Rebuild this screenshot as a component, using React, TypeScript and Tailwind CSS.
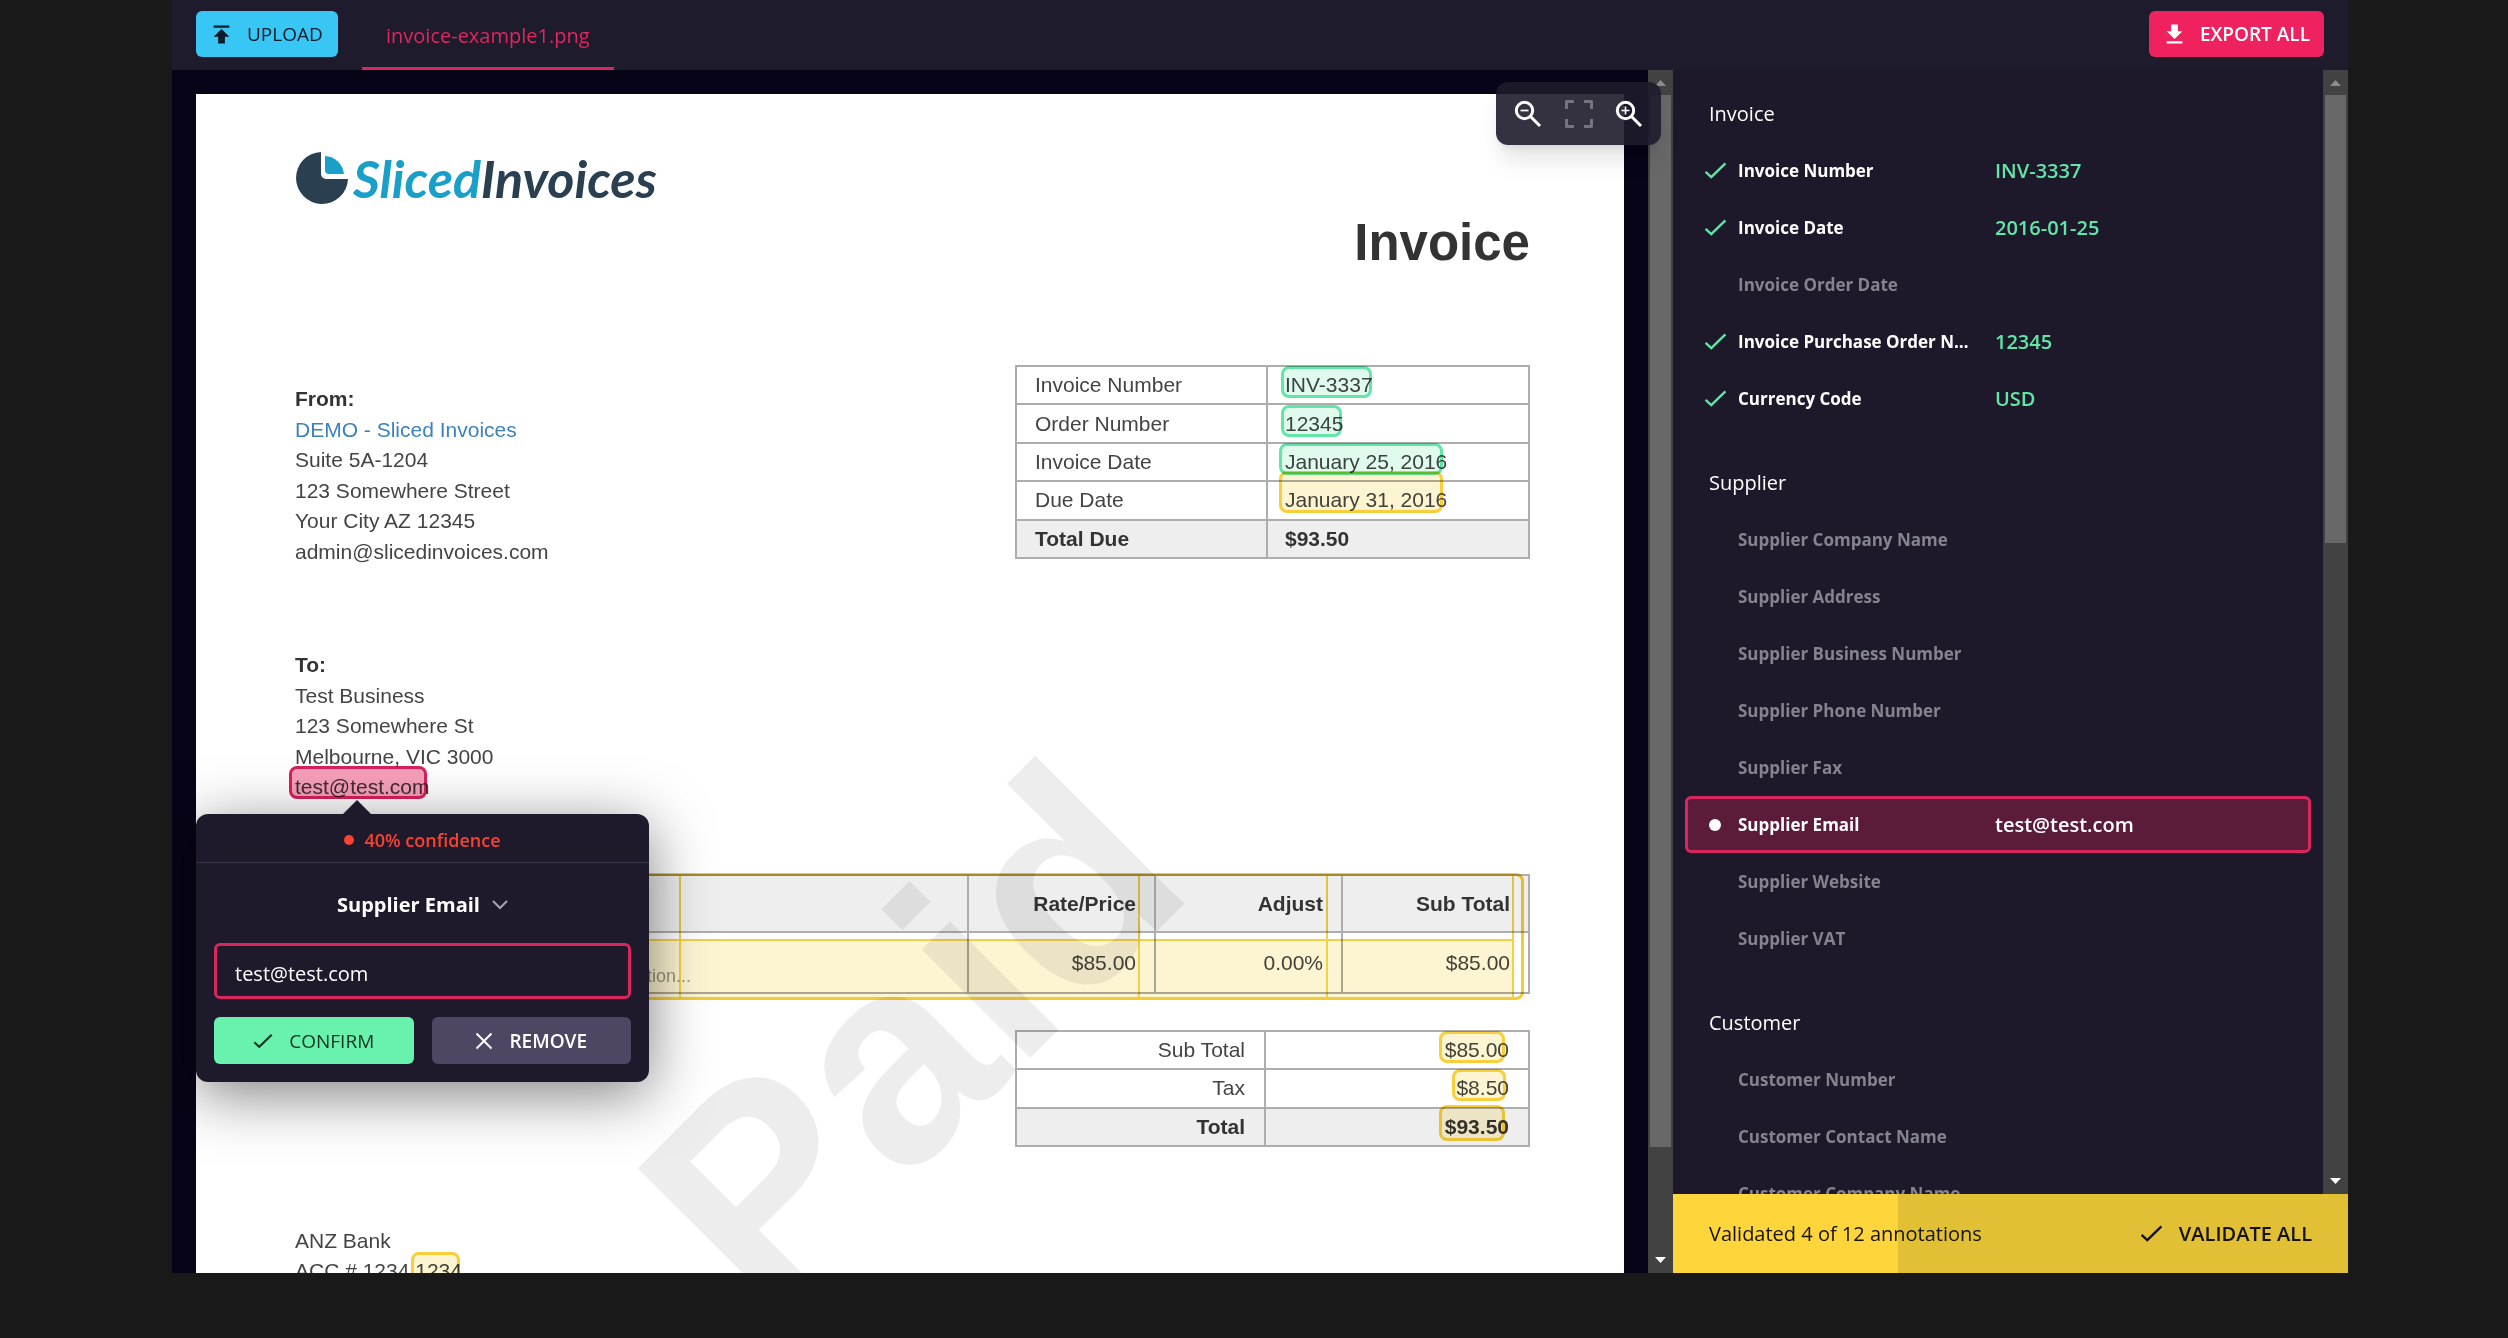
import React from "react";
import { MdPublish, MdFileDownload } from "react-icons/md";

type Tone = "green" | "yellow" | "pink";

const tones: Record<Tone, string> = {
  green: "border-[#62e6a8] bg-[#62e6a8]/20",
  yellow: "border-[#f8cf3a] bg-[#f8d84a]/25",
  pink: "border-[#d9205c] bg-[#ee2a66]/45",
};

function Mark({ tone, box, children }: { tone: Tone; box: string; children: React.ReactNode }) {
  return (
    <span className="relative inline-block">
      {children}
      <span className={`absolute rounded-lg border-3 mix-blend-multiply ${tones[tone]} ${box}`} />
    </span>
  );
}

function CheckIcon({ className }: { className: string }) {
  return (
    <svg viewBox="0 0 24 18" fill="none" stroke="currentColor" strokeWidth="2.5" className={className} aria-hidden="true">
      <path d="M1.5 10.5 7.5 16 22.5 1.5" />
    </svg>
  );
}

function Scrollbar({ thumb }: { thumb: string }) {
  return (
    <div className="flex w-[25px] shrink-0 flex-col items-center bg-[#424242]" aria-hidden="true">
      <svg viewBox="0 0 25 25" className="h-[25px] w-[25px] shrink-0"><path d="M7 16h11l-5.500-6z" fill="#8c8c8c" /></svg>
      <div className="min-h-0 w-full flex-1 px-[2px]">
        <div className={`bg-[#686868] ${thumb}`} />
      </div>
      <svg viewBox="0 0 25 25" className="h-[25px] w-[25px] shrink-0"><path d="M7 9h11l-5.500 6z" fill="#fff" /></svg>
    </div>
  );
}

type Field = { label: string; value?: string; active?: boolean };

const groups: { title: string; fields: Field[] }[] = [
  {
    title: "Invoice",
    fields: [
      { label: "Invoice Number", value: "INV-3337" },
      { label: "Invoice Date", value: "2016-01-25" },
      { label: "Invoice Order Date" },
      { label: "Invoice Purchase Order Number", value: "12345" },
      { label: "Currency Code", value: "USD" },
    ],
  },
  {
    title: "Supplier",
    fields: [
      { label: "Supplier Company Name" },
      { label: "Supplier Address" },
      { label: "Supplier Business Number" },
      { label: "Supplier Phone Number" },
      { label: "Supplier Fax" },
      { label: "Supplier Email", value: "test@test.com", active: true },
      { label: "Supplier Website" },
      { label: "Supplier VAT" },
    ],
  },
  {
    title: "Customer",
    fields: [
      { label: "Customer Number" },
      { label: "Customer Contact Name" },
      { label: "Customer Company Name" },
    ],
  },
];

function FieldRow({ label, value, active }: Field) {
  const frame = active ? "border-[#d9265f] bg-[#5b1c3a] text-white" : "border-transparent";
  const tone = value ? "text-white" : "text-[#85838d]";
  return (
    <li className={`flex h-[57px] items-center rounded-md border-3 ${frame}`}>
      <span className="flex w-[50px] shrink-0 justify-center pl-1">
        {active && <span className="size-3 rounded-full bg-white" />}
        {value && !active && <CheckIcon className="h-[17px] w-[23px] text-[#62e6a8]" />}
      </span>
      <span className={`w-[232px] shrink-0 truncate text-[17px] font-bold ${tone}`}>{label}</span>
      <span className={`ml-[25px] text-[20px] font-semibold ${active ? "text-white" : "text-[#62e6a8]"}`}>{value}</span>
    </li>
  );
}

function Header() {
  return (
    <header className="flex h-[70px] shrink-0 items-stretch bg-[#1e1b2c] px-6">
      <button className="mt-[11px] flex h-[46px] w-[142px] items-center gap-3 rounded-md bg-[#38c6f4] pl-3 text-[19px] font-medium text-[#0d1b2a]">
        <MdPublish className="size-[27px]" />
        UPLOAD
      </button>
      <nav className="ml-6 flex">
        <a href="#invoice" className="flex items-center border-b-3 border-[#d9265f] px-6 pt-1 text-[20px] text-[#e0265f]">
          invoice-example1.png
        </a>
      </nav>
      <button className="mt-[11px] ml-auto flex h-[46px] items-center gap-3 rounded-md bg-[#ef225f] pr-3.5 pl-3 text-[19px] font-semibold text-white">
        <MdFileDownload className="size-[27px]" />
        EXPORT ALL
      </button>
    </header>
  );
}

function ZoomBar() {
  return (
    <div className="absolute top-3 right-3 flex h-[63px] w-[165px] items-center justify-between rounded-xl bg-[#1e1b2c]/90 px-[18px] text-white shadow-xl">
      <button aria-label="Zoom out">
        <svg viewBox="0 0 28 28" className="size-7" fill="none" stroke="currentColor" strokeWidth="3">
          <circle cx="10.500" cy="10.500" r="8.200" />
          <path d="M16.500 16.500 26 26" />
          <path d="M6.500 10.500h8" strokeWidth="1.700" />
        </svg>
      </button>
      <button aria-label="Fit to screen" className="text-[#76737f]">
        <svg viewBox="0 0 28 28" className="size-7" fill="none" stroke="currentColor" strokeWidth="3" strokeLinejoin="round">
          <path d="M1.500 9V1.500H9M19 1.500h7.500V9M26.500 19v7.500H19M9 26.500H1.500V19" />
        </svg>
      </button>
      <button aria-label="Zoom in">
        <svg viewBox="0 0 28 28" className="size-7" fill="none" stroke="currentColor" strokeWidth="3">
          <circle cx="10.500" cy="10.500" r="8.200" />
          <path d="M16.500 16.500 26 26" />
          <path d="M6.500 10.500h8M10.500 6.500v8" strokeWidth="1.700" />
        </svg>
      </button>
    </div>
  );
}

function Popup() {
  return (
    <form className="absolute top-[720px] left-0 w-[453px] rounded-xl bg-[#1e1a2c] font-['Open_Sans','Noto_Sans',sans-serif] text-white shadow-[0_12px_60px_rgba(0,0,0,0.5)]">
      <svg viewBox="0 0 28 14" className="absolute -top-[14px] left-[147px] h-[14px] w-7" aria-hidden="true">
        <path d="M0 14 14 0l14 14z" fill="#1e1a2c" />
      </svg>
      <p className="flex h-[49px] items-center justify-center gap-2.5 border-b border-[#38354a] pt-1 text-[18px] font-semibold text-[#fb4130]">
        <span className="size-[10px] rounded-full bg-[#fb4130]" />
        40% confidence
      </p>
      <div className="flex flex-col px-[18px] pb-[18px]">
        <button type="button" className="mt-6 flex h-9 items-center justify-center gap-3 text-[20px] font-bold">
          Supplier Email
          <svg viewBox="0 0 16 10" className="h-[10px] w-4" fill="none" stroke="#a6a4b0" strokeWidth="2" aria-hidden="true">
            <path d="m1 1 7 7 7-7" />
          </svg>
        </button>
        <input
          aria-label="Supplier Email"
          defaultValue="test@test.com"
          className="mt-5 h-14 w-full rounded-md border-3 border-[#d9265f] bg-transparent px-[18px] pt-1 text-[20px] outline-none"
        />
        <div className="mt-[18px] grid grid-cols-2 gap-[18px] text-[19px]">
          <button type="button" className="flex h-[47px] items-center justify-center gap-4 rounded-md bg-[#69f2ae] font-medium text-[#0f3420]">
            <CheckIcon className="h-4 w-5" />
            CONFIRM
          </button>
          <button type="button" className="flex h-[47px] items-center justify-center gap-4 rounded-md bg-[#4d4763] font-semibold">
            <svg viewBox="0 0 18 18" className="size-[18px]" fill="none" stroke="currentColor" strokeWidth="2" aria-hidden="true">
              <path d="m1.500 1.500 15 15m0-15-15 15" />
            </svg>
            REMOVE
          </button>
        </div>
      </div>
    </form>
  );
}

const cell = "border-2 border-[#adadad]";

function InvoicePage() {
  return (
    <article className="relative h-full bg-white pt-14 pr-[94px] pl-[99px] font-['Liberation_Sans',sans-serif] text-[21px] leading-[30px] text-[#444]">
      <div className="flex h-14 items-center text-[52px]">
        <svg viewBox="0 0 54 54" className="size-[54px]" aria-hidden="true">
          <path d="M26 1A26 26 0 1 0 53 28H31a5 5 0 0 1-5-5z" fill="#2a3f50" />
          <path d="M30 5v14a4 4 0 0 0 4 4h15A20 20 0 0 0 30 5z" fill="#1a9fc9" />
        </svg>
        <span className="ml-1 font-['Lato',sans-serif] font-bold text-[#1a9fc9] italic">
          Sliced<span className="text-[#2a3f50]">Invoices</span>
        </span>
      </div>
      <h1 className="mt-[9px] text-right text-[51px] leading-[56px] font-bold text-[#333]">Invoice</h1>

      <div className="mt-[94px] flex h-[285px] items-start justify-between">
        <address className="mt-[19px] flex h-[183px] flex-col justify-between not-italic">
          <p className="font-bold text-[#333]">From:</p>
          <p><a href="#supplier" className="text-[#3c82bd]">DEMO - Sliced Invoices</a></p>
          <p>Suite 5A-1204</p>
          <p>123 Somewhere Street</p>
          <p>Your City AZ 12345</p>
          <p>admin@slicedinvoices.com</p>
        </address>
        <table className="h-[194px] w-[515px] table-fixed border-collapse">
          <tbody>
            <tr><td className={`${cell} w-[251px] pl-[18px]`}>Invoice Number</td><td className={`${cell} pl-[17px]`}><Mark tone="green" box="-top-1 -left-1 right-px h-8">INV-3337</Mark></td></tr>
            <tr><td className={`${cell} pl-[18px]`}>Order Number</td><td className={`${cell} pl-[17px]`}><Mark tone="green" box="-top-1 -left-1 right-px h-8">12345</Mark></td></tr>
            <tr><td className={`${cell} pl-[18px]`}>Invoice Date</td><td className={`${cell} pl-[17px]`}><Mark tone="green" box="-top-1 -left-1.5 right-1 h-8">January 25, 2016</Mark></td></tr>
            <tr><td className={`${cell} pl-[18px]`}>Due Date</td><td className={`${cell} pl-[17px]`}><Mark tone="yellow" box="-top-3.5 -left-1.5 right-1 h-[42px]">January 31, 2016</Mark></td></tr>
            <tr className="bg-[#eee] font-bold text-[#333]"><td className={`${cell} pl-[18px]`}>Total Due</td><td className={`${cell} pl-[17px]`}>$93.50</td></tr>
          </tbody>
        </table>
      </div>

      <address className="flex h-[152px] flex-col justify-between not-italic">
        <p className="font-bold text-[#333]">To:</p>
        <p>Test Business</p>
        <p>123 Somewhere St</p>
        <p>Melbourne, VIC 3000</p>
        <p><Mark tone="pink" box="-top-1.5 -left-1.5 right-[3px] h-[33px]">test@test.com</Mark></p>
      </address>

      <div className="relative mt-[72px]">
        <table className="h-[120px] w-full table-fixed border-collapse">
          <thead>
            <tr className="h-[57px] bg-[#eee] text-[#333]">
              <th className={`${cell} w-[115px]`} /><th className={cell} />
              <th className={`${cell} w-[187px] pr-[18px] text-right`}>Rate/Price</th>
              <th className={`${cell} w-[187px] pr-[18px] text-right`}>Adjust</th>
              <th className={`${cell} w-[187px] pr-[18px] text-right`}>Sub Total</th>
            </tr>
          </thead>
          <tbody>
            <tr>
              <td className={cell} />
              <td className={`${cell} pt-[26px] pl-[42px] text-[18px] text-[#999]`}>This is a sample description...</td>
              <td className={`${cell} pr-[18px] text-right`}>$85.00</td>
              <td className={`${cell} pr-[18px] text-right`}>0.00%</td>
              <td className={`${cell} pr-[18px] text-right`}>$85.00</td>
            </tr>
          </tbody>
        </table>
        <div className="absolute -top-px right-[6px] left-0 flex h-[127px] flex-col rounded-lg border-3 border-[#f3cb36] mix-blend-multiply">
          <div className="h-[63px] shrink-0" />
          <div className="mr-2 flex-1 border-t-2 border-[#f3d145] bg-[#f8d84a]/25" />
          <div className="absolute inset-y-0 right-[7px] left-0 flex justify-end">
            <span className="w-[461px] border-x-2 border-[#f3d145]" />
            <span className="w-[188px] border-r-2 border-[#f3d145]" />
            <span className="w-[186px] border-r-2 border-[#f3d145]" />
          </div>
        </div>
      </div>

      <table className="mt-9 ml-auto h-[117px] w-[515px] table-fixed border-collapse text-right">
        <tbody>
          <tr><td className={`${cell} w-[249px] pr-[19px]`}>Sub Total</td><td className={`${cell} pr-[19px]`}><Mark tone="yellow" box="-top-1 -left-1.5 right-1 h-8">$85.00</Mark></td></tr>
          <tr><td className={`${cell} pr-[19px]`}>Tax</td><td className={`${cell} pr-[19px]`}><Mark tone="yellow" box="-top-1 -left-1 right-[3px] h-8">$8.50</Mark></td></tr>
          <tr className="bg-[#eee] font-bold text-[#333]"><td className={`${cell} pr-[19px]`}>Total</td><td className={`${cell} pr-[19px]`}><Mark tone="yellow" box="-top-[7px] -left-1.5 right-1 h-9">$93.50</Mark></td></tr>
        </tbody>
      </table>

      <address className="mt-[79px] not-italic">
        <p>ANZ Bank</p>
        <p>ACC # 1234 <Mark tone="yellow" box="-top-1 -left-1 right-0.5 h-8">1234</Mark></p>
      </address>

      <p className="pointer-events-none absolute top-[797px] left-[408px] -rotate-45 text-[290px] leading-[288px] font-bold text-[#ededed] mix-blend-multiply" aria-hidden="true">
        Paid
      </p>
      <Popup />
    </article>
  );
}

export default function App() {
  return (
    <div className="flex h-screen flex-col bg-[#191919] pr-[160px] pb-[65px] pl-[172px] font-['Open_Sans','Noto_Sans',sans-serif]">
      <Header />
      <div className="flex min-h-0 flex-1">
        <main className="relative flex min-w-0 flex-1 bg-[#070417]">
          <div className="min-w-0 flex-1 overflow-hidden px-6 pt-6"><InvoicePage /></div>
          <Scrollbar thumb="h-[91.2%]" />
          <ZoomBar />
        </main>
        <aside className="flex w-[675px] shrink-0 flex-col bg-[#1d192b]">
          <div className="flex min-h-0 flex-1">
            <div className="flex min-w-0 flex-1 flex-col gap-[27px] overflow-hidden pt-[15px] pr-3 pl-3">
              {groups.map((g) => (
                <section key={g.title} className="shrink-0">
                  <h2 className="flex h-[57px] items-center pl-6 text-[20px] text-white">{g.title}</h2>
                  <ul>{g.fields.map((f) => <FieldRow key={f.label} {...f} />)}</ul>
                </section>
              ))}
            </div>
            <Scrollbar thumb="h-[41.7%]" />
          </div>
          <footer className="flex h-[79px] shrink-0 items-center justify-between bg-linear-to-r from-[#fed63b] from-[33.3%] to-[#e2c035] to-[33.3%] px-9 text-[20px] text-[#14120a]">
            <span>Validated 4 of 12 annotations</span>
            <button className="flex items-center gap-4 font-semibold">
              <CheckIcon className="h-[17px] w-[23px]" />
              VALIDATE ALL
            </button>
          </footer>
        </aside>
      </div>
    </div>
  );
}
